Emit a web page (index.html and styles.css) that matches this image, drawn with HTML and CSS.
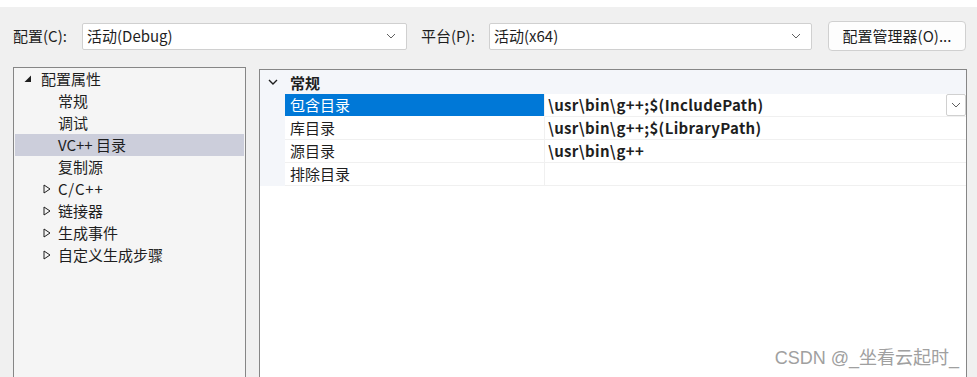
FILE: index.html
```html
<!DOCTYPE html>
<html lang="zh-CN">
<head>
<meta charset="utf-8">
<link rel="stylesheet" href="styles.css">
</head>
<body>
<div class="topstrip"></div>
<div class="toolbar">
  <span class="lbl lbl-config">配置(C):</span>
  <div class="combo combo-config">
    <span>活动(Debug)</span>
    <svg class="chev" width="10" height="6" viewBox="0 0 10 6"><polyline points="1,1 5,5 9,1" fill="none" stroke="#606060" stroke-width="1"/></svg>
  </div>
  <span class="lbl lbl-platform">平台(P):</span>
  <div class="combo combo-platform">
    <span>活动(x64)</span>
    <svg class="chev" width="10" height="6" viewBox="0 0 10 6"><polyline points="1,1 5,5 9,1" fill="none" stroke="#606060" stroke-width="1"/></svg>
  </div>
  <div class="btn">配置管理器(O)...</div>
</div>
<div class="main">
  <div class="tree">
    <div class="node">
      <svg class="exp" width="8" height="8" viewBox="0 0 8 8"><polygon points="7,0.5 7,7 0.5,7" fill="#1e1e1e"/></svg>
      <span>配置属性</span>
    </div>
    <div class="node child">常规</div>
    <div class="node child">调试</div>
    <div class="node child sel">VC++ 目录</div>
    <div class="node child">复制源</div>
    <div class="node sub">
      <svg class="exp2" width="8" height="10" viewBox="0 0 8 10"><polygon points="1,1 7,5 1,9" fill="none" stroke="#1e1e1e" stroke-width="1"/></svg>
      <span class="latin">C/C++</span>
    </div>
    <div class="node sub">
      <svg class="exp2" width="8" height="10" viewBox="0 0 8 10"><polygon points="1,1 7,5 1,9" fill="none" stroke="#1e1e1e" stroke-width="1"/></svg>
      <span>链接器</span>
    </div>
    <div class="node sub">
      <svg class="exp2" width="8" height="10" viewBox="0 0 8 10"><polygon points="1,1 7,5 1,9" fill="none" stroke="#1e1e1e" stroke-width="1"/></svg>
      <span>生成事件</span>
    </div>
    <div class="node sub">
      <svg class="exp2" width="8" height="10" viewBox="0 0 8 10"><polygon points="1,1 7,5 1,9" fill="none" stroke="#1e1e1e" stroke-width="1"/></svg>
      <span>自定义生成步骤</span>
    </div>
  </div>
  <div class="grid">
    <div class="cat">
      <svg class="catchev" width="10" height="6" viewBox="0 0 10 6"><polyline points="1,1 5,5 9,1" fill="none" stroke="#1e1e1e" stroke-width="1.4"/></svg>
      <span>常规</span>
    </div>
    <div class="row">
      <div class="gutter"></div>
      <div class="name selname">包含目录</div>
      <div class="value">
        <span>\usr\bin\g++;$(IncludePath)</span>
        <div class="dd"><svg width="10" height="6" viewBox="0 0 10 6"><polyline points="1,1 5,5 9,1" fill="none" stroke="#606060" stroke-width="1"/></svg></div>
      </div>
    </div>
    <div class="row">
      <div class="gutter"></div>
      <div class="name">库目录</div>
      <div class="value"><span>\usr\bin\g++;$(LibraryPath)</span></div>
    </div>
    <div class="row">
      <div class="gutter"></div>
      <div class="name">源目录</div>
      <div class="value"><span>\usr\bin\g++</span></div>
    </div>
    <div class="row">
      <div class="gutter"></div>
      <div class="name">排除目录</div>
      <div class="value"></div>
    </div>
  </div>
</div>
<div class="watermark">CSDN @_坐看云起时_</div>
</body>
</html>
```
FILE: styles.css
```css
html, body {
  margin: 0;
  padding: 0;
}
body {
  width: 977px;
  height: 377px;
  overflow: hidden;
  background: #f0f0f0;
  font-family: "Noto Sans CJK SC", "Noto Sans", sans-serif;
  font-size: 15px;
  color: #1e1e1e;
  position: relative;
}
.topstrip {
  height: 7px;
  background: #ffffff;
}
.toolbar {
  display: flex;
  align-items: center;
  height: 30px;
  padding: 14px 0 0 13px;
}
.lbl {
  line-height: 20px;
  white-space: nowrap;
}
.lbl-config { width: 69px; }
.lbl-platform { width: 68px; margin-left: 14px; }
.combo {
  box-sizing: border-box;
  height: 27px;
  background: #ffffff;
  border: 1px solid #d0d0d0;
  border-radius: 2px;
  display: flex;
  align-items: center;
  justify-content: space-between;
  padding: 0 10px 0 4px;
  line-height: 20px;
}
.combo-config { width: 325px; }
.combo-platform { width: 323px; }
.btn {
  box-sizing: border-box;
  margin-left: 16px;
  width: 138px;
  height: 30px;
  background: #fdfdfd;
  border: 1px solid #d0d0d0;
  border-radius: 4px;
  display: flex;
  align-items: center;
  justify-content: center;
  line-height: 20px;
}
.main {
  display: flex;
  align-items: flex-start;
  margin-top: 16px;
  padding-left: 13px;
}
.tree {
  box-sizing: border-box;
  width: 233px;
  height: 310px;
  background: #f5f5f5;
  border: 1px solid #868686;
  border-bottom: none;
  padding: 0 1px;
}
.node {
  height: 22px;
  line-height: 22px;
  display: flex;
  align-items: center;
  white-space: nowrap;
}
.node .exp {
  margin-left: 9px;
  margin-right: 9px;
}
.node.child {
  padding-left: 43px;
}
.node.sel {
  background: #cccedb;
}
.node.sub .exp2 {
  margin-left: 28px;
  margin-right: 7px;
}
.latin {
  letter-spacing: 0.8px;
}
.grid {
  box-sizing: border-box;
  margin-left: 13px;
  margin-top: 2px;
  width: 708px;
  height: 308px;
  background: #ffffff;
  border: 1px solid #868686;
  border-bottom: none;
}
.cat {
  height: 24px;
  background: #f4f6fa;
  display: flex;
  align-items: center;
  font-weight: bold;
}
.catchev {
  margin-left: 8px;
  margin-right: 12px;
}
.row {
  display: flex;
  height: 23px;
}
.gutter {
  width: 25px;
  background: #f4f6fa;
}
.name {
  box-sizing: border-box;
  width: 260px;
  padding-left: 5px;
  line-height: 22px;
  border-bottom: 1px solid #f0f0f0;
  border-right: 1px solid #f0f0f0;
  white-space: nowrap;
}
.selname {
  background: #0078d7;
  color: #ffffff;
  border-bottom-color: #ffffff;
}
.value {
  box-sizing: border-box;
  flex: 1;
  display: flex;
  align-items: center;
  justify-content: space-between;
  padding-left: 3px;
  line-height: 22px;
  border-bottom: 1px solid #f0f0f0;
  font-weight: bold;
  letter-spacing: 0.35px;
  white-space: nowrap;
}
.dd {
  box-sizing: border-box;
  width: 20px;
  height: 22px;
  border: 1px solid #d0d0d0;
  border-radius: 2px;
  background: #ffffff;
  display: flex;
  align-items: center;
  justify-content: center;
  align-self: flex-start;
}
.watermark {
  position: absolute;
  right: 18px;
  top: 347px;
  font-family: "Liberation Sans", "Noto Sans CJK SC", sans-serif;
  font-size: 18px;
  line-height: 22px;
  color: #a0a0a0;
}
```
